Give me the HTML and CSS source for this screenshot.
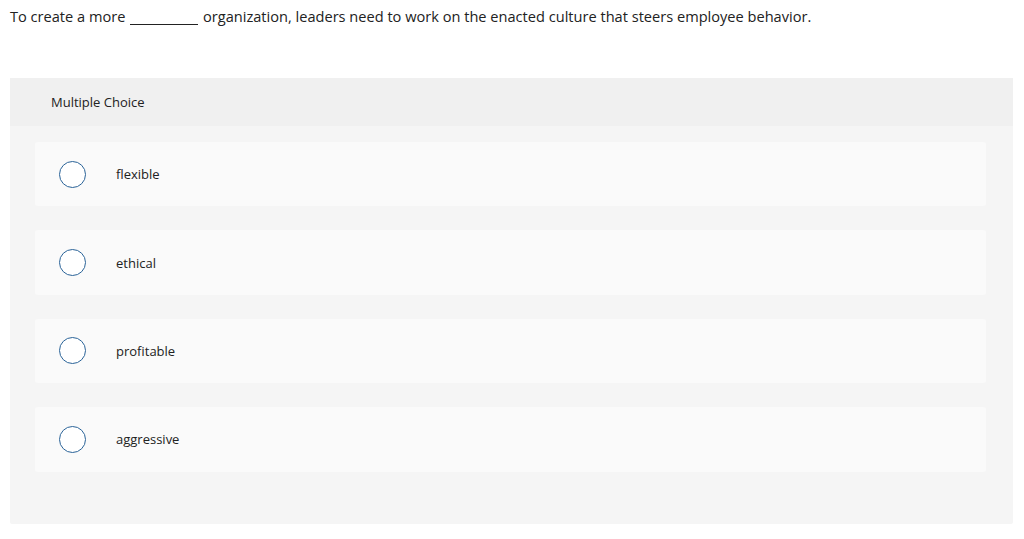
FILE: index.html
```html
<!DOCTYPE html>
<html>
<head>
<meta charset="utf-8">
<link rel="stylesheet" href="styles.css">
</head>
<body>
<p class="question">To create a more <span class="blank"></span> organization, leaders need to work on the enacted culture that steers employee behavior.</p>
<div class="panel">
  <div class="panel-head">Multiple Choice</div>
  <div class="options">
    <div class="option"><span class="radio"></span><span class="label">flexible</span></div>
    <div class="option"><span class="radio"></span><span class="label">ethical</span></div>
    <div class="option"><span class="radio"></span><span class="label">profitable</span></div>
    <div class="option"><span class="radio"></span><span class="label">aggressive</span></div>
  </div>
</div>
</body>
</html>
```
FILE: styles.css
```css
html, body { margin: 0; padding: 0; background: #fff; }
body {
  font-family: "Open Sans", "Noto Sans", sans-serif;
  color: #222;
  padding: 0 11px 0 10px;
}
.question {
  margin: 0;
  padding-top: 7px;
  font-size: 14.6px;
  line-height: 19px;
}
.blank {
  display: inline-block;
  width: 68px;
  border-bottom: 1px solid #222;
  vertical-align: -3px;
  margin: 0 1px;
}
.panel {
  margin-top: 52px;
  background: #f5f5f5;
  border-radius: 2px;
  padding-bottom: 52px;
}
.panel-head {
  background: #f0f0f0;
  height: 48px;
  display: flex;
  align-items: center;
  padding-left: 41px;
  font-size: 13px;
  color: #222;
}
.options {
  display: flex;
  flex-direction: column;
  gap: 24px;
  padding: 16px 27px 0 25px;
}
.option {
  background: #fafafa;
  border-radius: 3px;
  height: 64.4px;
  display: flex;
  align-items: center;
  padding-left: 24px;
}
.radio {
  width: 25px;
  height: 25px;
  border: 1px solid #2a6398;
  border-radius: 50%;
  background: #fff;
  flex: none;
}
.label {
  margin-left: 30px;
  font-size: 13px;
  color: #222;
}
```
